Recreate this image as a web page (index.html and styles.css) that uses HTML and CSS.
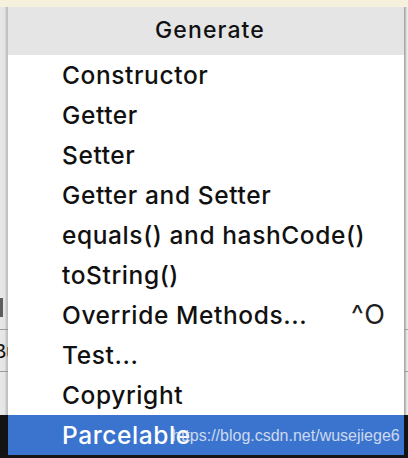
FILE: index.html
```html
<!DOCTYPE html>
<html>
<head>
<meta charset="utf-8">
<link rel="stylesheet" href="styles.css">
</head>
<body>
<div class="screen">
  <div class="top-strip"></div>
  <div class="stage">
    <div class="gutter">
      <div class="gutter-app">
        <div class="gutter-block"></div>
        <div class="gutter-line line-a"></div>
        <div class="gutter-text">Bu</div>
        <div class="gutter-line line-b"></div>
      </div>
      <div class="gutter-dark"></div>
    </div>
    <div class="menu">
      <div class="menu-header">Generate</div>
      <div class="menu-item">Constructor</div>
      <div class="menu-item">Getter</div>
      <div class="menu-item">Setter</div>
      <div class="menu-item">Getter and Setter</div>
      <div class="menu-item">equals() and hashCode()</div>
      <div class="menu-item">toString()</div>
      <div class="menu-item"><span>Override Methods...</span><span class="shortcut">^O</span></div>
      <div class="menu-item">Test...</div>
      <div class="menu-item">Copyright</div>
      <div class="menu-item selected">Parcelable<span class="watermark">https://blog.csdn.net/wusejiege6</span></div>
    </div>
    <div class="edge">
      <div class="edge-app">
        <div class="edge-line line-a"></div>
        <div class="edge-line line-b"></div>
      </div>
      <div class="edge-dark"></div>
    </div>
  </div>
</div>
</body>
</html>
```
FILE: styles.css
```css
html, body {
  margin: 0;
  padding: 0;
  background: #151515;
}
.screen {
  width: 408px;
  height: 458px;
  overflow: hidden;
  background: #151515;
  font-family: Inter, "Liberation Sans", sans-serif;
}
.top-strip {
  height: 7px;
  background: #f6f1dc;
}
.stage {
  display: flex;
  height: 448px;
}
.gutter {
  width: 8px;
  display: flex;
  flex-direction: column;
}
.gutter-app {
  flex: 1;
  overflow: hidden;
  background: linear-gradient(to right, #e8e8e8 0, #e4e4e4 5px, #c9c9c9 6px, #bdbdbd 8px);
  display: flex;
  flex-direction: column;
}
.gutter-block {
  margin-top: 291px;
  width: 3px;
  height: 19px;
  background: #5d5d5d;
}
.gutter-line {
  height: 1px;
  background: #9a9a9a;
}
.gutter-line.line-a {
  margin-top: 12px;
}
.gutter-text {
  margin-top: 10px;
  margin-left: -7px;
  font-family: "Liberation Sans", sans-serif;
  font-size: 20px;
  line-height: 22px;
  color: #111;
  white-space: nowrap;
}
.gutter-line.line-b {
  margin-top: 9px;
}
.gutter-dark {
  height: 40px;
  background: #131313;
}
.menu {
  width: 396px;
  background: #fff;
  display: flex;
  flex-direction: column;
}
.menu-header {
  height: 48px;
  background: #e5e5e5;
  color: #111;
  font-size: 23px;
  font-weight: 500;
  line-height: 47px;
  text-align: center;
  padding-left: 8px;
  letter-spacing: 1.1px;
}
.menu-item {
  height: 40px;
  line-height: 40px;
  padding: 0 19px 0 54px;
  font-size: 24.5px;
  font-weight: 500;
  letter-spacing: 0.6px;
  color: #111;
  display: flex;
  justify-content: space-between;
  white-space: nowrap;
  position: relative;
}
.menu-item.selected {
  background: #3b74cf;
  color: #fff;
}
.shortcut {
  color: #222;
  font-size: 27px;
  font-weight: 400;
  letter-spacing: 1px;
  margin-right: -1px;
}
.watermark {
  position: absolute;
  left: 164px;
  top: 1px;
  font-family: "Liberation Sans", sans-serif;
  font-size: 16px;
  font-weight: 400;
  letter-spacing: 0;
  color: rgba(232, 236, 244, 0.85);
}
.edge {
  width: 4px;
  display: flex;
  flex-direction: column;
}
.edge-app {
  flex: 1;
  background: linear-gradient(to right, #aaaaaa 0, #aaaaaa 1px, #d6d6d6 2px, #f2f2f2 4px);
  display: flex;
  flex-direction: column;
}
.edge-line {
  height: 1px;
  background: #a0a0a0;
}
.edge-line.line-a {
  margin-top: 322px;
}
.edge-line.line-b {
  margin-top: 41px;
}
.edge-dark {
  height: 40px;
  background: #131313;
}
```
